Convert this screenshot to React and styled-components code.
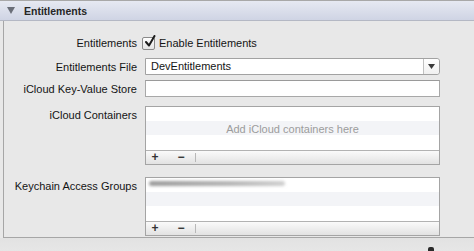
import React from "react";
import styled, { createGlobalStyle } from "styled-components";

const Global = createGlobalStyle`
  html, body { margin: 0; padding: 0; background: #e8e8e8; }
  body { width: 474px; height: 251px; overflow: hidden; font-family: "Liberation Sans", Arial, sans-serif; }
`;

const Page = styled.div`
  width: 474px;
  height: 251px;
  display: flex;
  flex-direction: column;
  background: #e8e8e8;
`;

const Header = styled.div`
  height: 19px;
  border-top: 1px solid #a8a8a8;
  border-bottom: 1px solid #b4b8c4;
  background: linear-gradient(#e6e9f2, #cfd4e4);
  display: flex;
  align-items: center;
  padding-left: 7px;
  gap: 9px;
  font-size: 10.5px;
  font-weight: bold;
  color: #262626;
`;

const Triangle = styled.svg`
  width: 8px;
  height: 7px;
  display: block;
`;

const Body = styled.div`
  height: 217px;
  margin-left: 3px;
  border-left: 1px solid #a6a6a6;
  border-bottom: 1px solid #a6a6a6;
  padding-top: 15px;
  box-sizing: border-box;
  display: flex;
  flex-direction: column;
`;

const Row = styled.div`
  display: grid;
  grid-template-columns: 133px 295px;
  column-gap: 8px;
  margin-top: ${(p) => p.$gap || 0}px;
  align-items: ${(p) => (p.$top ? "start" : "center")};
`;

const Label = styled.div`
  text-align: right;
  font-size: 11px;
  color: #141414;
  line-height: 14px;
  padding-top: ${(p) => (p.$top ? 2 : 0)}px;
`;

const CheckWrap = styled.label`
  display: flex;
  align-items: center;
  gap: 4px;
  font-size: 11px;
  color: #141414;
  height: 14px;
  margin-left: -3px;
`;

const Check = styled.span`
  width: 11px;
  height: 11px;
  border: 1px solid #8a8a8a;
  border-radius: 2px;
  background: linear-gradient(#ffffff, #e4e4e4);
  position: relative;
  display: block;
`;

const CheckMark = styled.svg`
  position: absolute;
  left: 1px;
  top: -3px;
  width: 12px;
  height: 13px;
`;

const Popup = styled.div`
  height: 17px;
  box-sizing: border-box;
  border: 1px solid #a2a2a2;
  border-radius: 0 3px 3px 0;
  background: #fff;
  display: flex;
  align-items: stretch;
  font-size: 11px;
  color: #141414;
`;

const PopupText = styled.div`
  flex: 1;
  padding-left: 5px;
  line-height: 15px;
`;

const PopupArrow = styled.div`
  width: 15px;
  border-left: 1px solid #c0c0c0;
  display: flex;
  align-items: center;
  justify-content: center;
  background: linear-gradient(#ffffff, #f0f0f0);
  border-radius: 0 3px 3px 0;
`;

const Field = styled.div`
  height: 17px;
  box-sizing: border-box;
  border: 1px solid #a8a8a8;
  border-top-color: #9a9a9a;
  background: #fff;
`;

const Table = styled.div`
  border: 1px solid #a4a4a4;
  background: #fff;
  display: flex;
  flex-direction: column;
`;

const Rows = styled.div`
  position: relative;
  display: flex;
  flex-direction: column;
  border-bottom: 1px solid #b2b2b2;
`;

const Stripe = styled.div`
  height: ${(p) => (p.$last ? 15 : 14)}px;
  background: ${(p) => (p.$alt ? "#f3f4f7" : "#ffffff")};
  display: flex;
  align-items: center;
`;

const Placeholder = styled.div`
  position: absolute;
  inset: 0;
  display: flex;
  align-items: center;
  justify-content: center;
  font-size: 11px;
  color: #9c9c9c;
`;

const Smudge = styled.div`
  margin-left: 3px;
  width: 136px;
  height: 5px;
  border-radius: 3px;
  background: linear-gradient(90deg, #9a9a9a, #b4b4b4 60%, #cfcfcf);
  filter: blur(1.4px);
  margin-top: -4px;
`;

const Bar = styled.div`
  height: 13px;
  background: linear-gradient(#fafafa, #e2e2e2);
  display: flex;
  align-items: center;
  font-size: 12px;
  color: #333;
`;

const BarButton = styled.span`
  width: 22px;
  display: flex;
  justify-content: center;
  align-items: center;
  margin-left: ${(p) => p.$ml || 0}px;
  font-weight: bold;
  line-height: 13px;
`;

const BarSep = styled.span`
  width: 1px;
  height: 9px;
  background: #b8b8b8;
  margin-left: 3px;
`;

const Footer = styled.div`
  flex: 1;
  background: linear-gradient(#e2e2e2, #e6e6e6);
  display: flex;
  justify-content: flex-end;
  align-items: flex-end;
  padding-right: 40px;
`;

const FooterKnob = styled.div`
  width: 6px;
  height: 4px;
  background: #2a2a2a;
  border-radius: 2px 2px 0 0;
`;

function ListTable({ rows, placeholder, smudge }) {
  return (
    <Table>
      <Rows>
        {rows.map((alt, i) => (
          <Stripe key={i} $alt={alt} $last={i === rows.length - 1}>
            {smudge && i === 0 ? <Smudge /> : null}
          </Stripe>
        ))}
        {placeholder ? <Placeholder>{placeholder}</Placeholder> : null}
      </Rows>
      <Bar>
        <BarButton $ml={-2}>+</BarButton>
        <BarButton $ml={4}>−</BarButton>
        <BarSep />
      </Bar>
    </Table>
  );
}

export default function App() {
  return (
    <Page>
      <Global />
      <Header>
        <Triangle viewBox="0 0 8 7">
          <path d="M0 0 H8 L4 7 Z" fill="#6a6e78" />
        </Triangle>
        Entitlements
      </Header>
      <Body>
        <Row>
          <Label>Entitlements</Label>
          <CheckWrap>
            <Check>
              <CheckMark viewBox="0 0 12 13">
                <path d="M2 7 L5 10.5 L10.5 1" fill="none" stroke="#1c1c1c" strokeWidth="2" strokeLinecap="round" strokeLinejoin="round" />
              </CheckMark>
            </Check>
            Enable Entitlements
          </CheckWrap>
        </Row>
        <Row $gap={8}>
          <Label>Entitlements File</Label>
          <Popup>
            <PopupText>DevEntitlements</PopupText>
            <PopupArrow>
              <svg width="7" height="5" viewBox="0 0 7 5">
                <path d="M0 0 H7 L3.5 5 Z" fill="#3a3a3a" />
              </svg>
            </PopupArrow>
          </Popup>
        </Row>
        <Row $gap={5}>
          <Label>iCloud Key-Value Store</Label>
          <Field />
        </Row>
        <Row $gap={9} $top>
          <Label $top>iCloud Containers</Label>
          <ListTable rows={[false, true, false]} placeholder="Add iCloud containers here" />
        </Row>
        <Row $gap={12} $top>
          <Label $top>Keychain Access Groups</Label>
          <ListTable rows={[false, true, false]} smudge />
        </Row>
      </Body>
      <Footer>
        <FooterKnob />
      </Footer>
    </Page>
  );
}
